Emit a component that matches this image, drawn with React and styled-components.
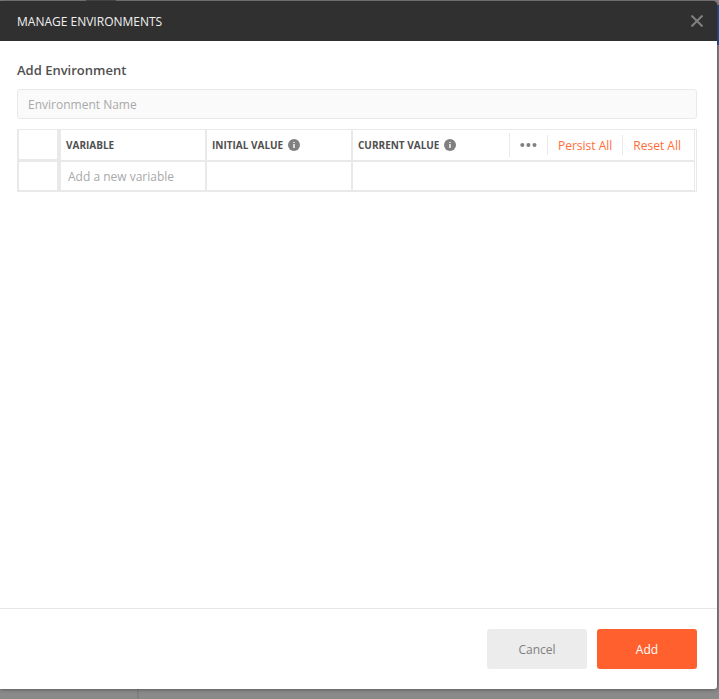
import React, { useState } from 'react'
import styled, { createGlobalStyle } from 'styled-components'

const GlobalStyle = createGlobalStyle`
  * {
    box-sizing: border-box;
  }
  body {
    margin: 0;
    font-family: 'Open Sans', sans-serif;
    font-size: 12px;
    color: #505050;
  }
  button, input {
    font-family: inherit;
    font-size: inherit;
  }
`
const Overlay = styled.div`
  min-height: 100vh;
  display: flex;
  padding: 1px 2px 10px 0;
  background-color: #8a8a8a;
  background-image:
    linear-gradient(#555, #555),
    linear-gradient(#22589b, #22589b),
    linear-gradient(#7f7f7f, #7f7f7f);
  background-repeat: no-repeat;
  background-position: 86px 0, right 5px, 137px bottom;
  background-size: 30px 1px, 2px 40px, 2px 10px;
`
const Modal = styled.div`
  flex: 1;
  display: flex;
  flex-direction: column;
  background-color: #fff;
  border-radius: 0 3px 3px 0;
  overflow: hidden;
  box-shadow: 0 0 4px rgba(0, 0, 0, 0.5);
`
const Header = styled.header`
  height: 40px;
  display: flex;
  align-items: center;
  justify-content: space-between;
  padding: 0 12px 0 17px;
  background-color: #303030;
`
const Title = styled.h1`
  margin: 0;
  font-size: 12px;
  font-weight: 400;
  color: #f0f0f0;
`
const CloseButton = styled.button`
  display: flex;
  padding: 2px;
  border: none;
  background: none;
  color: #808080;
  cursor: pointer;
`
const Content = styled.main`
  flex: 1;
  padding: 20px 20px 20px 17px;
`
const FieldLabel = styled.label`
  display: block;
  margin-bottom: 10px;
  font-size: 13px;
  line-height: 18px;
  font-weight: 600;
`
const NameInput = styled.input`
  display: block;
  width: 100%;
  height: 30px;
  margin-bottom: 10px;
  padding: 0 10px;
  border: 1px solid #e9e9e9;
  border-radius: 3px;
  background-color: #fafafa;
  color: #505050;
  outline: none;
  &::placeholder {
    color: #a9a9a9;
  }
`
const VariableTable = styled.table`
  width: 100%;
  table-layout: fixed;
  border: 1px solid #e9e9e9;
  border-spacing: 0;
  padding: 0 1px 0 0;
`
const Column = styled.col`
  width: ${({ $width }) => $width};
`
const HeadCell = styled.th`
  height: 31px;
  padding: 0 0 0 5px;
  border: solid #e9e9e9;
  border-width: ${({ $borders }) => $borders || '0 1px 1px'};
  font-size: 10px;
  font-weight: 700;
  text-align: left;
`
const Cell = styled.td`
  height: 30px;
  padding: 0;
  border: solid #e9e9e9;
  border-width: ${({ $borders }) => $borders || '1px'};
`
const CellInput = styled.input`
  display: block;
  width: 100%;
  height: 28px;
  padding: 0 7px;
  border: none;
  background: none;
  color: #505050;
  outline: none;
  &::placeholder {
    color: #a9a9a9;
  }
`
const HeadRow = styled.div`
  display: flex;
  align-items: center;
  justify-content: space-between;
`
const HeadLabel = styled.span`
  display: flex;
  align-items: center;
  gap: 5px;
`
const Actions = styled.div`
  display: flex;
  align-items: center;
  height: 24px;
  padding-right: 3px;
  border-left: 1px solid #e9e9e9;
`
const ActionButton = styled.button`
  display: flex;
  align-items: center;
  height: 20px;
  padding: 0 10px;
  border: none;
  border-left: ${({ $divided }) => ($divided ? '1px solid #e9e9e9' : 'none')};
  background: none;
  color: ${({ $divided }) => ($divided ? '#ff6c37' : '#808080')};
  font-size: 12px;
  white-space: nowrap;
  cursor: pointer;
`
const Footer = styled.footer`
  display: flex;
  justify-content: flex-end;
  gap: 10px;
  padding: 20px;
  border-top: 1px solid #e6e6e6;
`
const FooterButton = styled.button`
  width: 100px;
  height: 40px;
  border: none;
  border-radius: 3px;
  background-color: ${({ $primary }) => ($primary ? '#ff602e' : '#ececec')};
  color: ${({ $primary }) => ($primary ? '#fff' : '#808080')};
  cursor: pointer;
`

const InfoIcon = () => (
  <svg width="12" height="12" viewBox="0 0 12 12" aria-hidden="true">
    <circle cx="6" cy="6" r="6" fill="#808080" />
    <path d="M5 3h2v1H5zM5 5h2v4H5z" fill="#d8d8d8" />
  </svg>
)

const MoreIcon = () => (
  <svg width="17" height="4" viewBox="0 0 17 4" fill="currentColor" aria-hidden="true">
    <circle cx="2.3" cy="2" r="2" />
    <circle cx="8.4" cy="2" r="2" />
    <circle cx="14.5" cy="2" r="2" />
  </svg>
)

const CloseIcon = () => (
  <svg width="12" height="12" viewBox="0 0 12 12" aria-hidden="true">
    <path d="M0.5 0.5L11.5 11.5M11.5 0.5L0.5 11.5" stroke="currentColor" strokeWidth="2" />
  </svg>
)

const App = () => {
  const [name, setName] = useState('')
  const [row, setRow] = useState({ variable: '', initial: '', current: '' })

  const handleChange = (e) => {
    setRow({ ...row, [e.target.name]: e.target.value })
  }

  return (
    <>
      <GlobalStyle />
      <Overlay>
        <Modal role="dialog" aria-labelledby="modal-title">
          <Header>
            <Title id="modal-title">MANAGE ENVIRONMENTS</Title>
            <CloseButton aria-label="Close"><CloseIcon /></CloseButton>
          </Header>

          <Content>
            <FieldLabel htmlFor="env-name">Add Environment</FieldLabel>
            <NameInput
              id="env-name"
              value={name}
              onChange={(e) => setName(e.target.value)}
              placeholder="Environment Name"
            />
            <VariableTable>
              <colgroup>
                <Column $width="41px" />
                <Column $width="147px" />
                <Column $width="146px" />
                <Column $width="auto" />
              </colgroup>
              <thead>
                <tr>
                  <HeadCell $borders="0 2px 2px 1px" />
                  <HeadCell $borders="0 1px 1px 2px">VARIABLE</HeadCell>
                  <HeadCell>
                    <HeadLabel>INITIAL VALUE <InfoIcon /></HeadLabel>
                  </HeadCell>
                  <HeadCell>
                    <HeadRow>
                      <HeadLabel>CURRENT VALUE <InfoIcon /></HeadLabel>
                      <Actions>
                        <ActionButton aria-label="More options"><MoreIcon /></ActionButton>
                        <ActionButton $divided>Persist All</ActionButton>
                        <ActionButton $divided>Reset All</ActionButton>
                      </Actions>
                    </HeadRow>
                  </HeadCell>
                </tr>
              </thead>
              <tbody>
                <tr>
                  <Cell $borders="1px 2px 1px 1px" />
                  <Cell $borders="1px 1px 1px 2px">
                    <CellInput
                      name="variable"
                      aria-label="Variable"
                      value={row.variable}
                      onChange={handleChange}
                      placeholder="Add a new variable"
                    />
                  </Cell>
                  <Cell>
                    <CellInput name="initial" aria-label="Initial value" value={row.initial} onChange={handleChange} />
                  </Cell>
                  <Cell>
                    <CellInput name="current" aria-label="Current value" value={row.current} onChange={handleChange} />
                  </Cell>
                </tr>
              </tbody>
            </VariableTable>
          </Content>

          <Footer>
            <FooterButton>Cancel</FooterButton>
            <FooterButton $primary>Add</FooterButton>
          </Footer>
        </Modal>
      </Overlay>
    </>
  )
}

export default App
